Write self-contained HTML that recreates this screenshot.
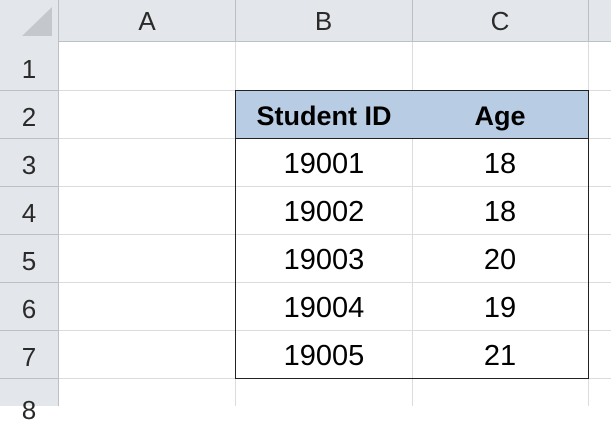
<!DOCTYPE html>
<html><head><style>
body{margin:0;width:611px;height:406px;overflow:hidden;background:#fff;font-family:"Liberation Sans",sans-serif;position:relative}
div{position:absolute;box-sizing:border-box}
.hd{background:#e3e6ea}
.t{color:#2a2a2a;font-size:26px;text-align:center;line-height:48px}
.c{color:#000;font-size:29px;text-align:center;line-height:48px;white-space:nowrap}
</style></head><body>
<div class="hd" style="left:0;top:0;width:611px;height:42px;border-bottom:1px solid #bcc0c5"></div>
<div class="hd" style="left:0;top:0;width:59px;height:406px;border-right:1px solid #bcc0c5"></div>
<svg style="position:absolute;left:0;top:0" width="60" height="42"><polygon points="22,36 52,7 52,36" fill="#c4c7cb"/></svg>
<div style="left:235px;top:0;width:1px;height:42px;background:#bcc0c5"></div>
<div style="left:412px;top:0;width:1px;height:42px;background:#bcc0c5"></div>
<div style="left:588px;top:0;width:1px;height:42px;background:#bcc0c5"></div>
<div class="t" style="left:59px;top:-3px;width:176px">A</div>
<div class="t" style="left:235px;top:-3px;width:177px">B</div>
<div class="t" style="left:412px;top:-3px;width:176px">C</div>
<div style="left:0;top:90px;width:59px;height:1px;background:#bcc0c5"></div>
<div style="left:0;top:138px;width:59px;height:1px;background:#bcc0c5"></div>
<div style="left:0;top:186px;width:59px;height:1px;background:#bcc0c5"></div>
<div style="left:0;top:234px;width:59px;height:1px;background:#bcc0c5"></div>
<div style="left:0;top:282px;width:59px;height:1px;background:#bcc0c5"></div>
<div style="left:0;top:330px;width:59px;height:1px;background:#bcc0c5"></div>
<div style="left:0;top:378px;width:59px;height:1px;background:#bcc0c5"></div>
<div style="left:59px;top:90px;width:552px;height:1px;background:#dadcdd"></div>
<div style="left:59px;top:138px;width:552px;height:1px;background:#dadcdd"></div>
<div style="left:59px;top:186px;width:552px;height:1px;background:#dadcdd"></div>
<div style="left:59px;top:234px;width:552px;height:1px;background:#dadcdd"></div>
<div style="left:59px;top:282px;width:552px;height:1px;background:#dadcdd"></div>
<div style="left:59px;top:330px;width:552px;height:1px;background:#dadcdd"></div>
<div style="left:59px;top:378px;width:552px;height:1px;background:#dadcdd"></div>
<div style="left:235px;top:42px;width:1px;height:364px;background:#dadcdd"></div>
<div style="left:412px;top:42px;width:1px;height:364px;background:#dadcdd"></div>
<div style="left:588px;top:42px;width:1px;height:364px;background:#dadcdd"></div>
<div class="t" style="left:0;top:45px;width:58px">1</div>
<div class="t" style="left:0;top:93px;width:58px">2</div>
<div class="t" style="left:0;top:141px;width:58px">3</div>
<div class="t" style="left:0;top:189px;width:58px">4</div>
<div class="t" style="left:0;top:237px;width:58px">5</div>
<div class="t" style="left:0;top:285px;width:58px">6</div>
<div class="t" style="left:0;top:333px;width:58px">7</div>
<div class="t" style="left:0;top:386px;width:58px">8</div>
<div style="left:235px;top:90px;width:354px;height:49px;background:#b8cce4;border-bottom:1px solid #222"></div>
<div style="left:235px;top:90px;width:354px;height:289px;border:1.5px solid #222"></div>
<div class="c" style="left:236px;top:92px;width:176px;font-weight:bold;font-size:27px">Student ID</div>
<div class="c" style="left:412px;top:92px;width:176px;font-weight:bold;font-size:27px">Age</div>
<div class="c" style="left:236px;top:140px;width:176px">19001</div><div class="c" style="left:412px;top:140px;width:176px">18</div>
<div class="c" style="left:236px;top:188px;width:176px">19002</div><div class="c" style="left:412px;top:188px;width:176px">18</div>
<div class="c" style="left:236px;top:236px;width:176px">19003</div><div class="c" style="left:412px;top:236px;width:176px">20</div>
<div class="c" style="left:236px;top:284px;width:176px">19004</div><div class="c" style="left:412px;top:284px;width:176px">19</div>
<div class="c" style="left:236px;top:332px;width:176px">19005</div><div class="c" style="left:412px;top:332px;width:176px">21</div>
</body></html>
